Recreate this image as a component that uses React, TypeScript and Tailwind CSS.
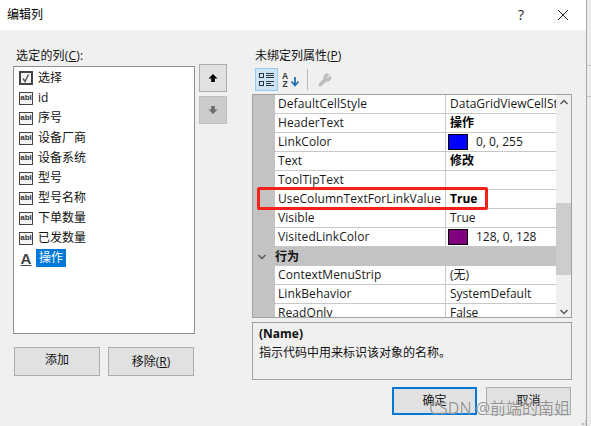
import React from 'react';
import { Wrench } from 'lucide-react';

const font = "font-['Open_Sans','Noto_Sans_CJK_SC',sans-serif]";

const columns = ['id', '序号', '设备厂商', '设备系统', '型号', '型号名称', '下单数量', '已发数量'];

type Row = { name: string; value?: string; bold?: boolean; swatch?: string };

const rowsTop: Row[] = [
  { name: 'DefaultCellStyle', value: 'DataGridViewCellStyle' },
  { name: 'HeaderText', value: '操作', bold: true },
  { name: 'LinkColor', value: '0, 0, 255', swatch: 'bg-[#0000ff]' },
  { name: 'Text', value: '修改', bold: true },
  { name: 'ToolTipText' },
  { name: 'UseColumnTextForLinkValue', value: 'True', bold: true },
  { name: 'Visible', value: 'True' },
  { name: 'VisitedLinkColor', value: '128, 0, 128', swatch: 'bg-[#800080]' },
];

const rowsBottom: Row[] = [
  { name: 'ContextMenuStrip', value: '(无)' },
  { name: 'LinkBehavior', value: 'SystemDefault' },
  { name: 'ReadOnly', value: 'False' },
];

const AblIcon = () => (
  <span className="w-[14px] h-[13px] border border-[#444] bg-[#f4f4f4] flex items-center justify-center text-[8px] leading-none font-bold text-[#333] font-['Liberation_Sans',sans-serif] shrink-0">
    abl
  </span>
);

const PropRow = ({ row }: { row: Row }) => (
  <div className="flex h-[19px] shrink-0">
    <div className="w-[22px] bg-[#c3c3c3] shrink-0" />
    <div className="w-[171px] shrink-0 bg-white border-b border-r border-[#c8c8c8] pl-[3px] leading-[18px] text-[#1a1a1a] tracking-[0.08px] whitespace-nowrap overflow-hidden">
      {row.name}
    </div>
    <div className="w-[110px] shrink-0 bg-white border-b border-[#c8c8c8] flex items-center pl-[4px] text-[#1a1a1a] whitespace-nowrap overflow-hidden">
      {row.swatch && <span className={`w-[20px] h-[16px] border border-black ml-[-2px] mr-[8px] shrink-0 ${row.swatch}`} />}
      <span className={row.bold ? 'font-bold text-black' : ''}>{row.value}</span>
    </div>
  </div>
);

const DlgButton = ({ className, children }: { className: string; children: React.ReactNode }) => (
  <button className={`bg-[#e1e1e1] flex items-center justify-center text-[12px] text-[#111] ${className}`}>{children}</button>
);

export default function App() {
  return (
    <div className={`w-[591px] h-[426px] bg-white overflow-hidden relative flex text-[12px] ${font}`}>
      <div className="w-[586px] h-full flex flex-col shrink-0">
        {/* title bar */}
        <div className="h-[30px] bg-white flex items-center justify-between shrink-0 pl-[7px] pr-[17px]">
          <span className="text-[12px] text-black">编辑列</span>
          <div className="flex items-center gap-[33px]">
            <span className="text-[14px] text-[#222] leading-none">?</span>
            <svg width="12" height="12" viewBox="0 0 12 12" fill="none" stroke="#222" strokeWidth="1">
              <path d="M1 1 L11 11 M11 1 L1 11" />
            </svg>
          </div>
        </div>

        <div className="flex-1 bg-[#f0f0f0] flex pt-[17px] relative">
          {/* left side */}
          <div className="w-[252px] shrink-0 flex flex-col pl-[13px]">
            <div className="h-[19px] leading-[17px] pl-[3px] text-[#111] tracking-[0.2px]">
              选定的列(<span className="underline">C</span>):
            </div>
            <div className="flex">
              <div className="w-[182px] h-[268px] bg-white border border-[#8a8f96] pt-px pl-[5px] flex flex-col text-[#111]">
                <div className="flex items-center h-[20px] gap-[4px]">
                  <span className="w-[14px] h-[14px] border-2 border-[#444] flex items-center justify-center shrink-0 bg-[#f4f4f4]">
                    <svg width="10" height="10" viewBox="0 0 10 10" fill="none" stroke="#555" strokeWidth="1.4">
                      <path d="M2 5.5 L4 8.5 L7.5 1.5" />
                    </svg>
                  </span>
                  <span className="ml-[1px]">选择</span>
                </div>
                {columns.map((c) => (
                  <div key={c} className="flex items-center h-[20px] gap-[5px]">
                    <AblIcon />
                    <span>{c}</span>
                  </div>
                ))}
                <div className="flex items-center h-[20px] gap-[5px]">
                  <span className="w-[14px] text-center text-[15px] font-bold text-[#444] underline leading-none font-['Liberation_Sans',sans-serif]">A</span>
                  <span className="bg-[#0078d7] text-white px-[3px] h-[18px] leading-[18px] ml-[-2px]">操作</span>
                </div>
              </div>
              <div className="flex flex-col gap-[4px] ml-[4px] mt-[-2px]">
                <button className="w-[28px] h-[28px] bg-[#e1e1e1] border border-[#adadad] flex items-center justify-center">
                  <svg width="10" height="10" viewBox="0 0 10 10" fill="#000"><path d="M5 1 L9.5 5.5 H6.8 V9 H3.2 V5.5 H0.5 Z" /></svg>
                </button>
                <button className="w-[28px] h-[28px] bg-[#cccccc] border border-[#bfbfbf] flex items-center justify-center">
                  <svg width="10" height="10" viewBox="0 0 10 10" fill="#6d6d6d"><path d="M5 9 L9.5 4.5 H6.8 V1 H3.2 V4.5 H0.5 Z" /></svg>
                </button>
              </div>
            </div>
            <div className="flex gap-[8px] mt-[13px] pl-[1px]">
              <DlgButton className="w-[86px] h-[29px] border border-[#adadad] pb-[4px]">添加</DlgButton>
              <DlgButton className="w-[86px] h-[29px] border border-[#adadad]">
                <span>移除(<span className="underline">R</span>)</span>
              </DlgButton>
            </div>
          </div>

          {/* right side */}
          <div className="flex flex-col w-[320px]">
            <div className="h-[19px] leading-[17px] text-[#111] pl-[3px]">
              未绑定列属性(<span className="underline">P</span>)
            </div>
            <div className="h-[28px] flex items-start pl-[3px] mt-[2px] gap-[1px]">
              <span className="w-[23px] h-[23px] bg-[#cce4f7] border border-[#99c9ef] flex items-center justify-center">
                <svg width="16" height="15" viewBox="0 0 16 15" fill="none" stroke="#333" strokeWidth="1">
                  <rect x="0.5" y="1.5" width="4" height="4" />
                  <rect x="0.5" y="9.5" width="4" height="4" />
                  <path d="M7 1.5 H15 M7 3.5 H15 M7 5.5 H15 M7 9.5 H15 M7 11.5 H12 M7 13.5 H15" />
                </svg>
              </span>
              <span className="w-[23px] h-[23px] flex items-center justify-center">
                <svg width="18" height="17" viewBox="0 0 18 17">
                  <text x="0" y="7.5" fontSize="8.5" fontWeight="700" fill="#333" fontFamily="Liberation Sans">A</text>
                  <text x="0.5" y="16" fontSize="8.5" fontWeight="700" fill="#333" fontFamily="Liberation Sans">Z</text>
                  <path d="M13 6 V14 M9.5 10.5 L13 14.5 L16.5 10.5" fill="none" stroke="#1e6fb0" strokeWidth="1.8" />
                </svg>
              </span>
              <span className="w-px h-[21px] bg-[#b8b8b8] mx-[4px] mt-px" />
              <span className="w-[23px] h-[23px] flex items-center justify-center">
                <Wrench size={14} fill="#bdbdbd" stroke="#bdbdbd" />
              </span>
            </div>

            {/* property grid */}
            <div className="w-[320px] h-[224px] border border-[#a0a0a0] flex overflow-hidden bg-white mt-[-2px]">
              <div className="w-[303px] shrink-0 flex flex-col overflow-hidden">
                {rowsTop.map((r) => <PropRow key={r.name} row={r} />)}
                <div className="h-[19px] shrink-0 bg-[#c3c3c3] flex items-center font-bold text-[#111]">
                  <svg className="ml-[5px] mr-[9px]" width="8" height="6" viewBox="0 0 8 6" fill="none" stroke="#555" strokeWidth="1.4">
                    <path d="M0.5 1 L4 4.5 L7.5 1" />
                  </svg>
                  行为
                </div>
                {rowsBottom.map((r) => <PropRow key={r.name} row={r} />)}
              </div>
              <div className="w-[15px] ml-auto bg-[#f0f0f0] flex flex-col items-center shrink-0">
                <svg className="mt-[4px]" width="8" height="6" viewBox="0 0 8 6" fill="none" stroke="#555" strokeWidth="1.5">
                  <path d="M0.5 5 L4 1.5 L7.5 5" />
                </svg>
                <div className="w-full h-[72px] bg-[#cdcdcd] mt-[98px]" />
                <svg className="mt-[34px]" width="8" height="6" viewBox="0 0 8 6" fill="none" stroke="#555" strokeWidth="1.5">
                  <path d="M0.5 1 L4 4.5 L7.5 1" />
                </svg>
              </div>
            </div>

            {/* description */}
            <div className="w-[320px] h-[58px] border border-[#a0a0a0] mt-[4px] px-[6px] pt-[2px] text-[#111]">
              <div className="font-bold leading-[18px]">(Name)</div>
              <div className="leading-[18px] mt-[1px]">指示代码中用来标识该对象的名称。</div>
            </div>

            <div className="flex justify-end gap-[9px] mt-[7px] pr-[1px]">
              <DlgButton className="w-[85px] h-[28px] border-2 border-[#0078d7]">确定</DlgButton>
              <DlgButton className="w-[85px] h-[28px] border border-[#adadad]">取消</DlgButton>
            </div>
          </div>
        </div>
      </div>

      {/* edge of the window behind the dialog */}
      <div className="flex-1 h-full bg-[#ececec] border-l border-[#a8a8a8] flex flex-col">
        <div className="h-[66px] border-b border-[#c4c4c4]" />
        <div className="h-[31px] border-b border-[#c4c4c4]" />
      </div>

      {/* annotation and watermark, both lie over the dialog */}
      <div className="absolute left-[257px] top-[187px] w-[231px] h-[23px] border-[3px] border-[#f5201a] rounded-[2px]" />
      <div className="absolute left-[429px] top-[399px] text-[16px] leading-[18px] text-[#777]/80 whitespace-nowrap [text-shadow:0_0_1px_#ffffff]">
        CSDN @前端的南姐
      </div>
      <div className="absolute right-[4px] bottom-[1px] grid grid-cols-2 gap-px">
        <span className="w-[2px] h-[2px]" />
        <span className="w-[2px] h-[2px] bg-[#b5b5b5]" />
        <span className="w-[2px] h-[2px] bg-[#b5b5b5]" />
        <span className="w-[2px] h-[2px] bg-[#b5b5b5]" />
      </div>
    </div>
  );
}
